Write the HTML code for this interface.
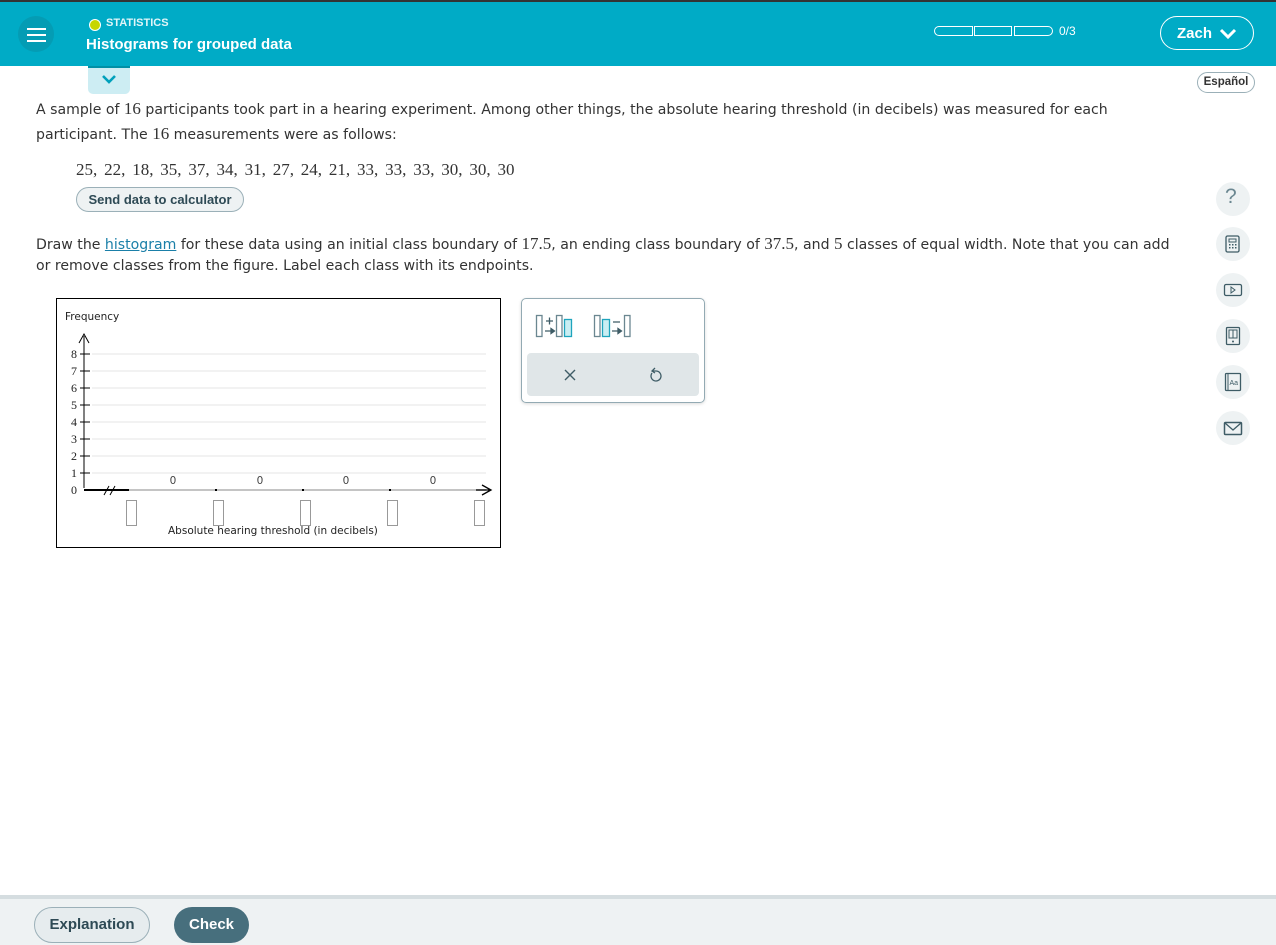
<!DOCTYPE html>
<html><head><meta charset="utf-8"><style>
body{margin:0;width:1276px;height:945px;position:relative;font-family:"Liberation Sans",sans-serif;background:#fff;overflow:hidden;color:#333}
.a{position:absolute}
.hdr{left:0;top:0;width:1276px;height:66px;background:#00abc6;border-top:2px solid #333;box-sizing:border-box}
.txt{font-family:"DejaVu Sans",sans-serif;font-size:14.1px;line-height:23px;color:#333;white-space:nowrap}
.serif{font-family:"Liberation Serif",serif;font-size:17px}
.side{width:34px;height:34px;border-radius:50%;background:#eef2f3;left:1216px}
</style></head><body>
<div class="a hdr"></div>
<div class="a" style="left:18px;top:16px;width:36px;height:36px;border-radius:50%;background:#049cb4"></div>
<div class="a" style="left:27px;top:28px;width:19px;height:2px;background:#fff;box-shadow:0 6px 0 #fff,0 12px 0 #fff"></div>
<div class="a" style="left:89px;top:19px;width:10px;height:10px;border-radius:50%;background:#c6d600;border:1px solid #fff"></div>
<div class="a" style="left:106px;top:17px;font-size:11px;font-weight:bold;color:#e2f5f8">STATISTICS</div>
<div class="a" style="left:86px;top:36px;font-size:15px;font-weight:bold;color:#fff">Histograms for grouped data</div>
<div class="a" style="left:88px;top:66px;width:42px;height:28px;background:#cdedf3;border-radius:0 0 5px 5px;border-top:2px solid #0090a6;box-sizing:border-box"></div>
<svg class="a" style="left:100px;top:73px" width="18" height="12"><path d="M3 3l6 6 6-6" stroke="#00a0bb" stroke-width="2.6" fill="none"/></svg>
<div class="a" style="left:934px;top:26px;width:37px;height:8px;border:1px solid #fff;border-radius:5px 0 0 5px"></div>
<div class="a" style="left:974px;top:26px;width:36px;height:8px;border:1px solid #fff"></div>
<div class="a" style="left:1014px;top:26px;width:37px;height:8px;border:1px solid #fff;border-radius:0 5px 5px 0"></div>
<div class="a" style="left:1059px;top:24px;font-size:12px;color:#fff">0/3</div>
<div class="a" style="left:1160px;top:16px;width:94px;height:34px;border:1.5px solid #fff;border-radius:18px;box-sizing:border-box"></div>
<div class="a" style="left:1177px;top:25px;font-size:15px;font-weight:bold;color:#fff">Zach</div>
<svg class="a" style="left:1218px;top:27px" width="20" height="14"><path d="M3 3l7 7 7-7" stroke="#fff" stroke-width="3" fill="none"/></svg>
<div class="a" style="left:1197px;top:72px;width:58px;height:21px;border:1px solid #9bb0b8;border-radius:11px;box-sizing:border-box;font-size:11.5px;font-weight:bold;text-align:center;line-height:19px;color:#333">Español</div>

<div class="a txt" style="left:36px;top:97px">A sample of <span class="serif">16</span> participants took part in a hearing experiment. Among other things, the absolute hearing threshold (in decibels) was measured for each<br>participant. The <span class="serif">16</span> measurements were as follows:</div>
<div class="a serif" style="left:76px;top:160px;color:#333;font-size:17px;word-spacing:2.6px">25, 22, 18, 35, 37, 34, 31, 27, 24, 21, 33, 33, 33, 30, 30, 30</div>
<div class="a" style="left:76px;top:187px;width:168px;height:25px;border:1px solid #9bb0b8;border-radius:13px;background:#eef2f3;box-sizing:border-box;font-size:13px;font-weight:bold;text-align:center;line-height:23px;color:#2e4a55">Send data to calculator</div>
<div class="a txt" style="left:36px;top:233px;line-height:21px">Draw the <span style="color:#1a7fa8;text-decoration:underline">histogram</span> for these data using an initial class boundary of <span class="serif">17.5</span>, an ending class boundary of <span class="serif">37.5</span>, and <span class="serif">5</span> classes of equal width. Note that you can add<br>or remove classes from the figure. Label each class with its endpoints.</div>

<svg class="a" style="left:56px;top:298px" width="446" height="251" font-family="DejaVu Sans,sans-serif">
<rect x="0.5" y="0.5" width="444" height="249" fill="#fff" stroke="#000"/>
<text x="9" y="22" font-size="10.5" fill="#222">Frequency</text>
<g stroke="#e6e6e6"><line x1="36" y1="56" x2="430" y2="56"/><line x1="36" y1="73" x2="430" y2="73"/><line x1="36" y1="90" x2="430" y2="90"/><line x1="36" y1="107" x2="430" y2="107"/><line x1="36" y1="124" x2="430" y2="124"/><line x1="36" y1="141" x2="430" y2="141"/><line x1="36" y1="158" x2="430" y2="158"/><line x1="36" y1="175" x2="430" y2="175"/></g>
<line x1="28" y1="190" x2="28" y2="38" stroke="#000"/><path d="M23 45l5-9 5 9" fill="none" stroke="#000"/>
<g stroke="#000"><line x1="24" y1="56" x2="34" y2="56"/><line x1="24" y1="73" x2="34" y2="73"/><line x1="24" y1="90" x2="34" y2="90"/><line x1="24" y1="107" x2="34" y2="107"/><line x1="24" y1="124" x2="34" y2="124"/><line x1="24" y1="141" x2="34" y2="141"/><line x1="24" y1="158" x2="34" y2="158"/><line x1="24" y1="175" x2="34" y2="175"/></g>
<g font-family="Liberation Serif,serif" font-size="12" fill="#222" text-anchor="end"><text x="21" y="60">8</text><text x="21" y="77">7</text><text x="21" y="94">6</text><text x="21" y="111">5</text><text x="21" y="128">4</text><text x="21" y="145">3</text><text x="21" y="162">2</text><text x="21" y="179">1</text><text x="21" y="196">0</text></g>
<line x1="73" y1="192" x2="430" y2="192" stroke="#c4c4c4" stroke-width="2"/>
<line x1="28" y1="192" x2="73" y2="192" stroke="#000" stroke-width="2"/>
<path d="M48 197l5-9M54 197l5-9" stroke="#000"/>
<path d="M420 192h14M426 187l9 5-9 5" stroke="#000" fill="none" stroke-width="1.3"/>
<g fill="#000"><rect x="159" y="191" width="2" height="2"/><rect x="246" y="191" width="2" height="2"/><rect x="333" y="191" width="2" height="2"/></g>
<g font-size="10.5" fill="#444" text-anchor="middle"><text x="117" y="186">0</text><text x="204" y="186">0</text><text x="290" y="186">0</text><text x="377" y="186">0</text></g>
<g fill="none" stroke="#333" stroke-dasharray="1,1"><rect x="70.5" y="202.5" width="10" height="25"/><rect x="157.5" y="202.5" width="10" height="25"/><rect x="244.5" y="202.5" width="10" height="25"/><rect x="331.5" y="202.5" width="10" height="25"/><rect x="418.5" y="202.5" width="10" height="25"/></g>
<text x="112" y="236" font-size="10.5" fill="#222">Absolute hearing threshold (in decibels)</text>
</svg>

<div class="a" style="left:521px;top:298px;width:184px;height:105px;border:1px solid #93aab3;border-radius:5px;box-sizing:border-box;box-shadow:0 1px 3px rgba(0,0,0,.15)"></div>
<svg class="a" style="left:530px;top:308px" width="110" height="36">
<g fill="none" stroke="#6b8791" stroke-width="1.3"><rect x="6.5" y="7.5" width="5.5" height="21"/><rect x="26.5" y="7.5" width="5.5" height="21"/><rect x="64.5" y="7.5" width="5.5" height="21"/><rect x="94.5" y="7.5" width="5.5" height="21"/></g>
<rect x="34.5" y="11.5" width="7" height="17" fill="#c9eef3" stroke="#1ea4bd" stroke-width="1.3"/>
<rect x="72.5" y="11.5" width="7" height="17" fill="#c9eef3" stroke="#1ea4bd" stroke-width="1.3"/>
<g stroke="#3e5c66" stroke-width="1.3" fill="#3e5c66"><path d="M16 13h7M19.5 9.5v7M15 23h7M83 14h7M82 23h7"/><path d="M21 20.5l3.5 2.5-3.5 2.5zM88 20.5l3.5 2.5-3.5 2.5z"/></g>
</svg>
<div class="a" style="left:527px;top:353px;width:172px;height:43px;background:#e0e6e8;border-radius:4px"></div>
<svg class="a" style="left:563px;top:368px" width="14" height="14"><path d="M2 2l10 10M12 2L2 12" stroke="#3e5c66" stroke-width="1.4"/></svg>
<svg class="a" style="left:648px;top:366px" width="16" height="18"><path d="M4 7a5 5 0 1 0 4-2H5M7 2L4 5l3 2" fill="none" stroke="#3e5c66" stroke-width="1.3"/></svg>

<div class="a side" style="top:182px"></div><div class="a" style="left:1225px;top:185px;font-size:21px;color:#6b8791">?</div>
<div class="a side" style="top:227px"></div>
<svg class="a" style="left:1223px;top:234px" width="20" height="20"><rect x="3" y="2" width="13" height="16" rx="1.5" fill="none" stroke="#3e5c66" stroke-width="1.3"/><rect x="6" y="5" width="7" height="3" fill="none" stroke="#3e5c66"/><g fill="#3e5c66"><rect x="6" y="10" width="1.5" height="1.5"/><rect x="9" y="10" width="1.5" height="1.5"/><rect x="12" y="10" width="1.5" height="1.5"/><rect x="6" y="13" width="1.5" height="1.5"/><rect x="9" y="13" width="1.5" height="1.5"/><rect x="12" y="13" width="1.5" height="1.5"/></g></svg>
<div class="a side" style="top:273px"></div>
<svg class="a" style="left:1223px;top:280px" width="20" height="20"><rect x="1.5" y="4.5" width="17" height="11" rx="1.5" fill="none" stroke="#3e5c66" stroke-width="1.3"/><path d="M8 7v6l4-3z" fill="none" stroke="#3e5c66"/></svg>
<div class="a side" style="top:319px"></div>
<svg class="a" style="left:1223px;top:326px" width="20" height="20"><rect x="3.5" y="1.5" width="13" height="17" rx="1" fill="none" stroke="#3e5c66" stroke-width="1.3"/><path d="M6 4h8v8H6zM10 4v8" fill="none" stroke="#3e5c66"/><circle cx="10" cy="15.5" r="1" fill="#3e5c66"/></svg>
<div class="a side" style="top:365px"></div>
<svg class="a" style="left:1223px;top:372px" width="20" height="20"><rect x="2.5" y="1.5" width="15" height="17" rx="1" fill="none" stroke="#3e5c66" stroke-width="1.3"/><line x1="5" y1="2" x2="5" y2="18" stroke="#3e5c66"/><text x="6.5" y="13" font-size="7" fill="#3e5c66" font-family="Liberation Sans">Aa</text></svg>
<div class="a side" style="top:411px"></div>
<svg class="a" style="left:1223px;top:418px" width="20" height="20"><rect x="1.5" y="4.5" width="17" height="12" rx="1" fill="none" stroke="#3e5c66" stroke-width="1.5"/><path d="M2 5l8 7 8-7" fill="none" stroke="#3e5c66" stroke-width="1.3"/></svg>

<div class="a" style="left:0;top:895px;width:1276px;height:50px;background:#eef2f3;border-top:4px solid #d5dde0;box-sizing:border-box"></div>
<div class="a" style="left:34px;top:907px;width:116px;height:36px;border:1px solid #9bb0b8;border-radius:18px;background:#e6ecee;box-sizing:border-box;font-size:15px;font-weight:bold;text-align:center;line-height:34px;color:#2e4a55">Explanation</div>
<div class="a" style="left:174px;top:907px;width:75px;height:36px;border-radius:18px;background:#476f7d;font-size:15px;font-weight:bold;text-align:center;line-height:36px;color:#fff">Check</div>
</body></html>
